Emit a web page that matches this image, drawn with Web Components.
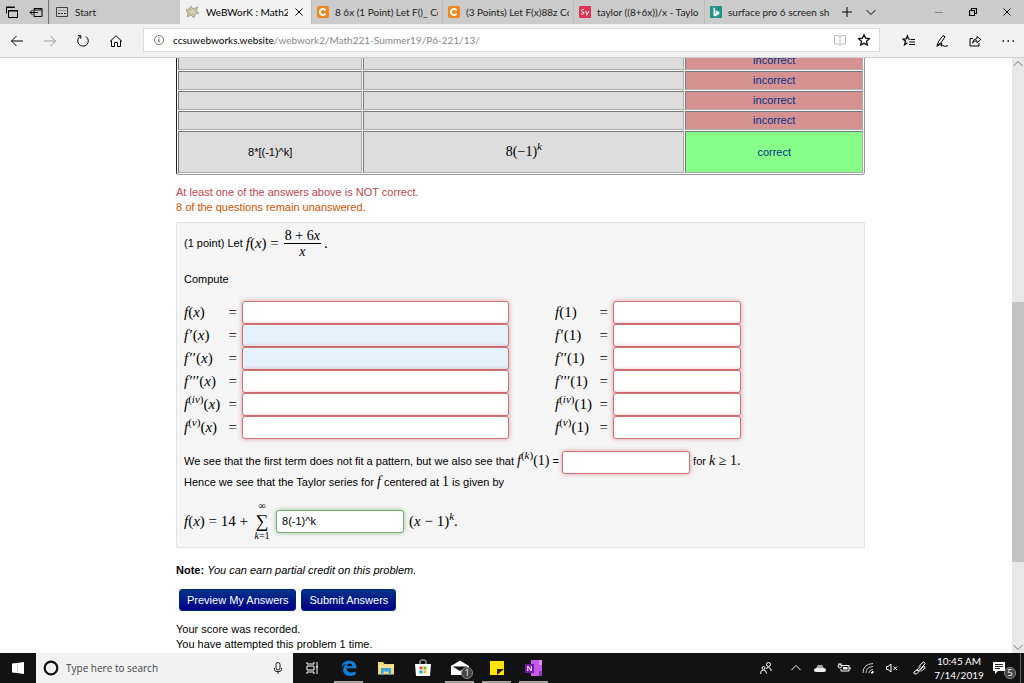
<!DOCTYPE html>
<html lang="en">
<head>
<meta charset="utf-8">
<title>WeBWorK : Math221</title>
<style>
  body {
    margin: 0;
    font-family: "Liberation Sans", Arial, sans-serif;
    font-size: 11px;
    line-height: 15px;
    color: #000;
  }
</style>
</head>
<body>
<desktop-screen></desktop-screen>

<script>
// all icons in one place, each one is [viewBox size, svg content]
const ICONS = {
  tabs: [14, '<path d="M1.5 8.5v-6h8M1 2h9M3.5 5.5h9v7h-9zM3 6h10"/>'],
  aside: [14, '<path d="M5 3.5h8v8H5zM5 5h8M9 7.5H1M3.5 5L1 7.5 3.5 10"/>'],
  start: [14, '<path d="M1.500 2.500h11v9h-11z" stroke="#444"/><path d="M3 5.500h8" stroke="#999"/><path d="M3 8.500h2M6 8.500h2M9 8.500h2" stroke="#222"/>'],
  web: [14, '<path d="M5 1l2 3 5-2-2 4 3 2-4 1-1 4-3-3-4 2 1-4-3-3 4-1z" fill="#c9c4a4" stroke="#aaa68c"/><path d="M7 5l-2 3M9 9L7 6" stroke="#eee"/>'],
  chegg: [12, '<rect width="12" height="12" rx="2" fill="#f08519" stroke="none"/><path d="M8.500 4.500a3 3 0 1 0 0 3" stroke="#fff" stroke-width="2"/>'],
  symbolab: [12, '<rect width="12" height="12" rx="1" fill="#e0324f" stroke="none"/><path d="M5 4C4 3 2.300 3.300 2.500 4.800S5 5.600 5 7 3 8.500 2 7.600M6.500 5l1.500 3M9.800 5L8 9H7" stroke="#fff"/>'],
  bing: [12, '<rect width="12" height="12" fill="#1f9488" stroke="none"/><path d="M3.500 1.500l1.500.6v5.400l1.500-.8-.8-.4L5 4.300l4.300 1.600v2L5 10.500l-1.500-1z" fill="#fff" stroke="none"/>'],
  close: [10, '<path d="M1.500 1.500l7 7M8.500 1.500l-7 7"/>'],
  plus: [12, '<path d="M6 1v10M1 6h10"/>'],
  down: [12, '<path d="M1.500 4L6 8.500 10.500 4"/>'],
  up: [12, '<path d="M1.500 8L6 3.500 10.500 8"/>'],
  min: [10, '<path d="M1 5.500h8" stroke="#888"/>'],
  restore: [10, '<path d="M1.500 3.500h5v5h-5zM3.500 3v-1.500h5v5H7" stroke-width="1.100"/>'],
  back: [14, '<path d="M1.500 7H13M6.500 2L1.500 7l5 5"/>'],
  forward: [14, '<path d="M1 7h11.500M7.500 2l5 5-5 5" stroke="#999"/>'],
  refresh: [14, '<path d="M10 2.500a5.300 5.300 0 1 1-5.500-.3M1.800 1.700h3v3"/>'],
  home: [14, '<path d="M1 7.500l6-5.800 6 5.800M2.500 6.500v6h3v-4h3v4h3v-6"/>'],
  info: [12, '<circle cx="6" cy="6" r="4.500" stroke="#777"/><path d="M6 5v3.500M6 3v1" stroke="#555"/>'],
  book: [14, '<path d="M1.500 2.500H5Q7 2.500 7 4q0-1.500 2-1.500h3.500v8.500H9q-2 0-2 1.500Q7 11 5 11H1.500zM7 4v8" stroke="#bbb"/>'],
  star: [14, '<path d="M7 1.800l1.600 3.400 3.800.5-2.800 2.600.7 3.800L7 10.300l-3.300 1.800.7-3.800-2.800-2.600 3.800-.5z" stroke-width="1.200"/>'],
  favs: [14, '<path d="M8 5H6.500L5.400 2 4.200 5H1l2.500 2.200-1 3.600 3-2M8.500 5.500H13M7.500 8H13M7 10.500h6" stroke-width="1.200"/>'],
  pen: [14, '<path d="M2 11.500l1.500-4L8 1.500l2 1.300-4 6zM1.500 12.500q3-2 5.500-3l-1 2.500q2-1 3 0t4-.5"/>'],
  share: [14, '<path d="M5 4.500H2v7.500h9V9M9 2.500l3.800 3L9 8.800V6.800Q6 6.500 4.500 9 5 5 9 4.500z"/>'],
  more: [14, '<path d="M1.500 7h1.500M6.500 7H8M11.500 7H13" stroke-width="1.500"/>'],
  windows: [14, '<path d="M1 2.500L6 2v4.900H1zM6.200 1.900L13 1v5.900H6.200zM1 7.100h5V12l-5-.5zM6.200 7.100H13V13l-6.800-.9z" fill="#fff" stroke="none"/>'],
  cortana: [16, '<circle cx="8" cy="8" r="6.300" stroke="#111" stroke-width="2.200"/>'],
  mic: [14, '<rect x="5" y="1.500" width="4" height="7.500" rx="2"/><path d="M3.500 7v1.500q0 2 2.500 2h2q2.500 0 2.500-2V7M7 10.500V13"/>'],
  taskview: [14, '<path d="M2 1v2h7V1M2 13v-2h7v2M2 5h7v4H2zM12 1v12M12 5v2"/>'],
  edge: [18, '<path d="M1.500 8.500C2.200 3.500 5.500 1.500 9.200 1.500c5 0 7.300 3.600 7.300 7.800H6.500c0 3.200 2.500 4.200 5 4.200 1.500 0 3-.4 4.200-1.100v3.200c-1.500.9-3.300 1.300-5.300 1.300-4.500 0-7.200-2.500-7.200-6.400C3.200 8 4.500 6 6.500 5c-2 .2-3.700 1.300-5 3.500zM6.700 7.300h5.600C12.200 5.500 11.200 4.600 9.600 4.600 8 4.600 7 5.600 6.700 7.300z" fill="#0c7fdc" stroke="none"/>'],
  folder: [18, '<path d="M1 3h5l1.500 2H17v10.500H1z" fill="#f7d777" stroke="none"/><path d="M1 6.500h16v2H1z" fill="#fbe9a9" stroke="none"/><path d="M4 9h10v7h-2.500v-3.500h-5V16H4z" fill="#38a8e0" stroke="none"/>'],
  store: [18, '<path d="M1 5h16l-1 12H2z" fill="#fff" stroke="none"/><path d="M6 5V2.500q0-1.500 1.500-1.500h3Q12 1 12 2.500V5" stroke="#ddd"/><path d="M5.500 7.500h3v3h-3z" fill="#f25022" stroke="none"/><path d="M9.500 7.500h3v3h-3z" fill="#7fba00" stroke="none"/><path d="M5.500 11.500h3v3h-3z" fill="#00a4ef" stroke="none"/><path d="M9.500 11.500h3v3h-3z" fill="#ffb900" stroke="none"/>'],
  mail: [18, '<path d="M0 7l9-5.500L18 7v9H0z" fill="#fff" stroke="none"/><path d="M1.500 7.500h15L9 12z" fill="#151515" stroke="none"/>'],
  sticky: [16, '<path d="M1 1h14v14H1z" fill="#ffe500" stroke="none"/><path d="M8 15V9h7z" fill="#222" stroke="none"/><path d="M9 15l6-5.500V15z" fill="#ffe500" stroke="none"/>'],
  onenote: [18, '<path d="M6 1h11v16H6z" fill="#c35be8" stroke="none"/><path d="M14 1h3v5h-3z" fill="#e08bfa" stroke="none"/><path d="M14 12h3v5h-3z" fill="#8d35b5" stroke="none"/><path d="M0 5h9v9H0z" fill="#7719aa" stroke="none"/><path d="M2.800 12V7l3.500 5V7" stroke="#fff"/>'],
  people: [14, '<circle cx="9.500" cy="3.500" r="2"/><circle cx="4.500" cy="7" r="1.500"/><path d="M1.500 13q0-4 3-4t3 3.500M7 7.500q2.500-2.500 5 .5V10"/>'],
  cloud: [14, '<path d="M3.500 11Q.5 11 1 8.500 1.500 7 3.500 7 4.500 3.500 7.500 4q2.500.3 2.700 2.800Q13 7 13 9t-2 2z" fill="#eee" stroke="none"/><path d="M3.500 7q1-3.500 4-3 2.500.3 2.700 2.800-2-.5-3.200 1Q5.500 6.500 3.500 7z" fill="#aaa" stroke="none"/>'],
  battery: [14, '<path d="M3.500 4.500H12v5.500H4V8M13 6v2.500M1 4h4M2 4V2M4 2v2M1 4.500q0 2.500 2 2.500t2-2.500"/><path d="M6 6h4.500v2.500H6z" fill="#fff" stroke="none"/>'],
  wifi: [14, '<path d="M2 12Q2 3 12 2.500M5 12q0-6 7-6.500M8 12q0-3 4-3.500" stroke="#ccc"/><path d="M10 12h2v-2z" fill="#fff"/>'],
  mute: [14, '<path d="M1.500 5.500H3L6 3v8L3 8.500H1.500zM8.500 5.500l3.500 3.500M12 5.500L8.500 9"/>'],
  link: [14, '<path d="M7 5.500L10 2q1.500-1.500 2.500-.5t-.5 2.500L7 9.500q-1.500 1-2-.5M6 8l-4 3q-1 1.500 1 2t3-1.500L11 6q1.500-1.500 2 0t-2 2.500L9 10.500M4.500 9.500L8.500 5"/>'],
  notes: [14, '<path d="M1 1h12v9H6l-3 3v-3H1z" fill="#fff" stroke="none"/><path d="M3 3.500h8M3 5.500h8M3 7.500h5" stroke="#222"/>']
};

class UiIcon extends HTMLElement {
  constructor() {
    super();
    this.attachShadow({ mode: "open" });
  }
  connectedCallback() {
    const [size, body] = ICONS[this.getAttribute("name")];
    this.shadowRoot.innerHTML = `
      <style>
        :host { display: block; flex: none; }
        svg { display: block; }
      </style>
      <svg width="${size}" height="${size}" viewBox="0 0 ${size} ${size}" fill="none" stroke="currentColor" aria-hidden="true">${body}</svg>`;
  }
}
customElements.define("ui-icon", UiIcon);

// small clickable icon used in the browser bars and in the taskbar
class IconButton extends HTMLElement {
  constructor() {
    super();
    this.attachShadow({ mode: "open" });
  }
  connectedCallback() {
    this.shadowRoot.innerHTML = `
      <style>
        :host { display: flex; flex: none; width: 34px; position: relative; }
        button {
          flex: 1; display: flex; align-items: center; justify-content: center;
          border: 0; padding: 0; background: none; color: inherit; font: inherit;
        }
        :host([open]) button { border-bottom: 2px solid #a8a29f; margin: 0 4px; padding-top: 2px; }
        ::slotted(*) {
          position: absolute; left: 20px; top: 14px; width: 12px; height: 12px;
          border-radius: 50%; background: #444; border: 1px solid #888; box-sizing: border-box;
          font-size: 9px; line-height: 10px; text-align: center; color: #fff;
        }
      </style>
      <button type="button" aria-label="${this.getAttribute("label")}"><ui-icon name="${this.getAttribute("icon")}"></ui-icon></button>
      <slot></slot>`;
  }
}
customElements.define("icon-button", IconButton);

class BrowserTab extends HTMLElement {
  constructor() {
    super();
    this.attachShadow({ mode: "open" });
  }
  connectedCallback() {
    this.shadowRoot.innerHTML = `
      <style>
        :host {
          display: flex; align-items: center; gap: 6px; width: 131px; box-sizing: border-box;
          padding: 0 4px 0 5px; border-left: 1px solid #bdbdbd; color: #222;
        }
        :host([active]) { background: #f2f2f2; border-color: #f2f2f2; color: #000; }
        span { flex: 1; min-width: 0; overflow: hidden; white-space: nowrap; }
        button { border: 0; padding: 0 3px 0 0; background: none; color: inherit; }
      </style>
      <ui-icon name="${this.getAttribute("icon")}"></ui-icon>
      <span><slot></slot></span>
      ${this.hasAttribute("active") ? '<button type="button" aria-label="Close tab"><ui-icon name="close"></ui-icon></button>' : ""}`;
  }
}
customElements.define("browser-tab", BrowserTab);

class BrowserChrome extends HTMLElement {
  constructor() {
    super();
    this.attachShadow({ mode: "open" });
    this.shadowRoot.innerHTML = `
      <style>
        :host { display: block; font-family: Lato, "Noto Sans", sans-serif; font-size: 10px; line-height: 14px; }
        .tabs { display: flex; height: 24px; background: #cbcbcb; }
        .tabs icon-button { width: 24px; }
        .win { display: flex; margin-left: auto; }
        .win icon-button { width: 34px; }
        .lead { display: flex; width: 48px; border-right: 1px solid #777; }
        .bar { display: flex; height: 33px; background: #f2f2f2; border-bottom: 1px solid #cfcfcf; }
        .bar icon-button { width: 33px; }
        .address {
          flex: 1; display: flex; align-items: center; margin: 4px 12px 5px 11px; height: 22px;
          background: #fff; border: 1px solid #ddd; padding: 0 3px 0 9px;
        }
        .address icon-button { width: 24px; }
        label { margin-left: 8px; color: #000; }
        input {
          flex: 1; min-width: 0; border: 0; padding: 0; background: none; outline: 0;
          font: inherit; color: #888;
        }
      </style>
      <nav class="tabs">
        <div class="lead">
          <icon-button icon="tabs" label="Tabs set aside"></icon-button>
          <icon-button icon="aside" label="Set these tabs aside"></icon-button>
        </div>
        <browser-tab icon="start">Start</browser-tab>
        <browser-tab icon="web" active>WeBWorK : Math22</browser-tab>
        <browser-tab icon="chegg">8 6x (1 Point) Let F()_ Co</browser-tab>
        <browser-tab icon="chegg">(3 Points) Let F(x)88z Co</browser-tab>
        <browser-tab icon="symbolab">taylor ((8+6x))/x - Taylo</browser-tab>
        <browser-tab icon="bing">surface pro 6 screen sh</browser-tab>
        <icon-button icon="plus" label="New tab"></icon-button>
        <icon-button icon="down" label="Tab previews"></icon-button>
        <div class="win">
          <icon-button icon="min" label="Minimize"></icon-button>
          <icon-button icon="restore" label="Restore"></icon-button>
          <icon-button icon="close" label="Close"></icon-button>
        </div>
      </nav>
      <div class="bar">
        <icon-button icon="back" label="Back"></icon-button>
        <icon-button icon="forward" label="Forward"></icon-button>
        <icon-button icon="refresh" label="Refresh"></icon-button>
        <icon-button icon="home" label="Home"></icon-button>
        <div class="address">
          <ui-icon name="info"></ui-icon>
          <label for="url">ccsuwebworks.website</label>
          <input id="url" type="text" value="/webwork2/Math221-Summer19/P6-221/13/">
          <icon-button icon="book" label="Reading view"></icon-button>
          <icon-button icon="star" label="Add to favorites"></icon-button>
        </div>
        <icon-button icon="favs" label="Hub"></icon-button>
        <icon-button icon="pen" label="Add notes"></icon-button>
        <icon-button icon="share" label="Share"></icon-button>
        <icon-button icon="more" label="More"></icon-button>
      </div>`;
  }
}
customElements.define("browser-chrome", BrowserChrome);

// inline math, sup and i elements are passed in
class MathText extends HTMLElement {
  constructor() {
    super();
    this.attachShadow({ mode: "open" });
    this.shadowRoot.innerHTML = `
      <style>
        :host { font-family: "Liberation Serif", "Times New Roman", serif; font-size: 15px; white-space: nowrap; line-height: 15px; }
        :host([small]) { font-size: 14px; }
        ::slotted(sup) { font-size: 11px; line-height: 0; }
      </style>
      <slot></slot>`;
  }
}
customElements.define("math-text", MathText);

class MathFraction extends HTMLElement {
  constructor() {
    super();
    this.attachShadow({ mode: "open" });
    this.shadowRoot.innerHTML = `
      <style>
        :host { display: inline-flex; flex-direction: column; text-align: center; margin-left: 2px; }
        .top { border-bottom: 1px solid #000; padding: 0 1px; }
      </style>
      <math-text class="top" small><slot name="top"></slot></math-text>
      <math-text small><slot name="bottom"></slot></math-text>`;
  }
}
customElements.define("math-fraction", MathFraction);

class MathSum extends HTMLElement {
  constructor() {
    super();
    this.attachShadow({ mode: "open" });
    this.shadowRoot.innerHTML = `
      <style>
        :host {
          display: flex; flex-direction: column; align-items: center; width: 18px;
          font-family: "Liberation Serif", serif; font-size: 10px; line-height: 10px; white-space: nowrap;
        }
        .sigma { font-size: 18px; line-height: 20px; }
      </style>
      <slot name="to"></slot><span class="sigma">∑</span><slot name="from"></slot>`;
  }
}
customElements.define("math-sum", MathSum);

// label and answer blank, drawn red unless it is marked correct
class AnswerBlank extends HTMLElement {
  constructor() {
    super();
    this.attachShadow({ mode: "open" });
  }
  connectedCallback() {
    this.shadowRoot.innerHTML = `
      <style>
        :host { display: inline-flex; align-items: center; vertical-align: middle; }
        label { display: flex; align-items: center; justify-content: space-between; }
        :host([row]) { display: flex; }
        :host([row]) label { width: 53px; margin-right: 5px; }
        input {
          box-sizing: border-box; width: 128px; height: 23px; margin: 0; padding: 0 5px; outline: 0;
          border: 1px solid #cf7474; border-radius: 3px; background: #fff;
          box-shadow: 0 0 4px rgba(200, 70, 70, 0.5); font: inherit; color: #000;
        }
        :host([wide]) input { width: 267px; }
        :host([filled]) input { background: #e5f1fb; }
        :host([correct]) input { border-color: #6fb36f; box-shadow: 0 0 4px rgba(70, 160, 70, 0.6); }
      </style>
      <label for="ans"><slot></slot></label>
      <input id="ans" type="text" value="${this.getAttribute("value") || ""}">`;
    if (!this.textContent) this.shadowRoot.querySelector("input").setAttribute("aria-label", "answer");
  }
}
customElements.define("answer-blank", AnswerBlank);

class ResultsTable extends HTMLElement {
  constructor() {
    super();
    this.attachShadow({ mode: "open" });
    const wrong = '<tr><td></td><td></td><td class="bad">incorrect</td></tr>';
    this.shadowRoot.innerHTML = `
      <style>
        :host { display: block; }
        table {
          width: 100%; table-layout: fixed; border-collapse: separate; border-spacing: 1px;
          border: 1px solid #999; border-left-color: #222; border-radius: 3px;
        }
        col:first-child { width: 27%; }
        col:last-child { width: 26%; }
        td {
          box-sizing: border-box; height: 19px; padding: 0; text-align: center; line-height: 15px;
          background: #ddd; border: 1px solid #aaa; border-top-color: #777; border-left-color: #777;
        }
        .last td { height: 42px; }
        .bad { background: #d69191; color: #038; }
        .good { background: #8f8; color: #038; }
      </style>
      <table>
        <colgroup><col><col><col></colgroup>
        <tbody>
          ${wrong.repeat(4)}
          <tr class="last">
            <td>8*[(-1)^k]</td>
            <td><math-text small>8(−1)<sup><i>k</i></sup></math-text></td>
            <td class="good">correct</td>
          </tr>
        </tbody>
      </table>`;
  }
}
customElements.define("results-table", ResultsTable);

class ProblemBox extends HTMLElement {
  constructor() {
    super();
    this.attachShadow({ mode: "open" });
    // hair space keeps the primes clear of the slanted f
    const orders = ["", "\u200a′", "\u200a′′", "\u200a′′′", "<sup>(<i>iv</i>)</sup>", "<sup>(<i>v</i>)</sup>"];
    // one column of derivatives for the given argument
    const column = (arg, wide) => orders.map((o, i) => `
      <answer-blank row ${wide ? "wide" : ""} ${wide && (i == 1 || i == 2) ? "filled" : ""}>
        <math-text><i>f</i>${o}(${arg})</math-text><math-text>=</math-text>
      </answer-blank>`).join("");
    this.shadowRoot.innerHTML = `
      <style>
        :host { display: block; background: #f5f5f5; border: 1px solid #e3e3e3; border-radius: 2px; padding: 5px 7px 6px; }
        p { margin: 0; }
        .line { display: flex; align-items: center; gap: 3px; }
        .compute { margin: 13px 0 14px; }
        .grid { display: flex; gap: 46px; margin-bottom: 12px; }
        .sum { display: flex; align-items: center; gap: 5px; margin-top: 11px; }
      </style>
      <p class="line">(1 point) Let <math-text><i>f</i>(<i>x</i>) =</math-text>
        <math-fraction><span slot="top">8 + 6<i>x</i></span><i slot="bottom">x</i></math-fraction><math-text>.</math-text>
      </p>
      <p class="compute">Compute</p>
      <div class="grid">
        <div>${column("<i>x</i>", true)}</div>
        <div>${column("1", false)}</div>
      </div>
      <p>We see that the first term does not fit a pattern, but we also see that
        <math-text small><i>f</i><sup>(<i>k</i>)</sup>(1)</math-text> = <answer-blank></answer-blank>
        for <math-text small><i>k</i> ≥ 1.</math-text></p>
      <p>Hence we see that the Taylor series for <math-text small><i>f</i></math-text> centered at <math-text small>1</math-text> is given by</p>
      <div class="sum">
        <math-text><i>f</i>(<i>x</i>) = 14 +</math-text>
        <math-sum><span slot="to">∞</span><span slot="from"><i>k</i>=1</span></math-sum>
        <answer-blank correct value="8(-1)^k"></answer-blank>
        <math-text>(<i>x</i> − 1)<sup><i>k</i></sup>.</math-text>
      </div>`;
  }
}
customElements.define("problem-box", ProblemBox);

class SubmitButton extends HTMLElement {
  constructor() {
    super();
    this.attachShadow({ mode: "open" });
    this.shadowRoot.innerHTML = `
      <style>
        :host { display: block; }
        button {
          height: 22px; padding: 0 7px; border: 1px solid #002a6c; border-radius: 3px; font: inherit;
          color: #fff; background: linear-gradient(#038, #008);
        }
      </style>
      <button type="button"><slot></slot></button>`;
  }
}
customElements.define("submit-button", SubmitButton);

class ProblemPage extends HTMLElement {
  constructor() {
    super();
    this.attachShadow({ mode: "open" });
    this.shadowRoot.innerHTML = `
      <style>
        :host { display: grid; grid-template-columns: minmax(0, 1fr) 12px; overflow: hidden; background: #fff; }
        main { padding: 0 147px 0 176px; overflow: hidden; }
        /* the page is scrolled, so the first row is cut */
        results-table { margin-top: -9px; }
        p { margin: 0; }
        .messages { margin: 10px 0 7px; }
        .wrong { color: #c1454f; }
        .left { color: #cf5300; }
        .note { margin: 15px 0 11px; }
        .buttons { display: flex; gap: 5px; margin: 0 3px 11px; }
        .scroll { display: flex; flex-direction: column; align-items: center; background: #e9e9e9; color: #777; }
        .scroll ui-icon { height: 12px; }
        .thumb { width: 12px; background: #c2c2c2; flex: 260; }
        .before { flex: 232; }
        .after { flex: 79; }
      </style>
      <main>
        <results-table></results-table>
        <div class="messages">
          <p class="wrong">At least one of the answers above is NOT correct.</p>
          <p class="left">8 of the questions remain unanswered.</p>
        </div>
        <problem-box></problem-box>
        <p class="note"><b>Note:</b> <i>You can earn partial credit on this problem.</i></p>
        <div class="buttons">
          <submit-button>Preview My Answers</submit-button>
          <submit-button>Submit Answers</submit-button>
        </div>
        <p>Your score was recorded.</p>
        <p>You have attempted this problem 1 time.</p>
      </main>
      <div class="scroll">
        <ui-icon name="up"></ui-icon>
        <div class="before"></div><div class="thumb"></div><div class="after"></div>
        <ui-icon name="down"></ui-icon>
      </div>`;
  }
}
customElements.define("problem-page", ProblemPage);

class TaskBar extends HTMLElement {
  constructor() {
    super();
    this.attachShadow({ mode: "open" });
    this.shadowRoot.innerHTML = `
      <style>
        :host {
          display: flex; height: 30px; background: #121212; color: #fff;
          font-family: "Open Sans", "Noto Sans", sans-serif; font-size: 10px; line-height: 14px;
        }
        icon-button { width: 37px; }
        .search { display: flex; align-items: center; width: 250px; padding-left: 7px; background: #f2f2f2; color: #222; }
        .search input {
          flex: 1; min-width: 0; margin-left: 7px; padding: 0; border: 0; outline: 0; background: none;
          font: inherit;
        }
        .search input::placeholder { color: #444; opacity: 1; }
        .search icon-button { width: 30px; }
        .tray { display: flex; margin-left: auto; }
        .tray icon-button { width: 24px; }
        .tray .side { width: 30px; }
        time { width: 50px; text-align: center; padding-top: 1px; white-space: nowrap; font-family: Lato, sans-serif; }
        .end { width: 3px; margin-left: 6px; border-left: 1px solid #666; }
      </style>
      <icon-button icon="windows" label="Start" style="width: 36px"></icon-button>
      <div class="search">
        <ui-icon name="cortana"></ui-icon>
        <input type="text" aria-label="Search" placeholder="Type here to search">
        <icon-button icon="mic" label="Voice search"></icon-button>
      </div>
      <icon-button icon="taskview" label="Task view"></icon-button>
      <icon-button icon="edge" label="Edge" open></icon-button>
      <icon-button icon="folder" label="File Explorer"></icon-button>
      <icon-button icon="store" label="Store"></icon-button>
      <icon-button icon="mail" label="Mail" open><span>1</span></icon-button>
      <icon-button icon="sticky" label="Sticky Notes" open></icon-button>
      <icon-button icon="onenote" label="OneNote" open></icon-button>
      <div class="tray">
        <icon-button class="side" icon="people" label="People"></icon-button>
        <icon-button icon="up" label="Hidden icons" style="margin-left: 3px"></icon-button>
        <icon-button icon="cloud" label="OneDrive"></icon-button>
        <icon-button icon="battery" label="Battery"></icon-button>
        <icon-button icon="wifi" label="Network"></icon-button>
        <icon-button icon="mute" label="Volume"></icon-button>
        <icon-button class="side" icon="link" label="Ink workspace"></icon-button>
        <time>10:45 AM<br>7/14/2019</time>
        <icon-button class="side" icon="notes" label="Notifications"><span>5</span></icon-button>
        <div class="end"></div>
      </div>`;
  }
}
customElements.define("task-bar", TaskBar);

class DesktopScreen extends HTMLElement {
  constructor() {
    super();
    this.attachShadow({ mode: "open" });
    this.shadowRoot.innerHTML = `
      <style>
        :host { display: flex; flex-direction: column; height: 100vh; }
        problem-page { flex: 1; min-height: 0; }
      </style>
      <browser-chrome></browser-chrome>
      <problem-page></problem-page>
      <task-bar></task-bar>`;
  }
}
customElements.define("desktop-screen", DesktopScreen);
</script>
</body>
</html>
